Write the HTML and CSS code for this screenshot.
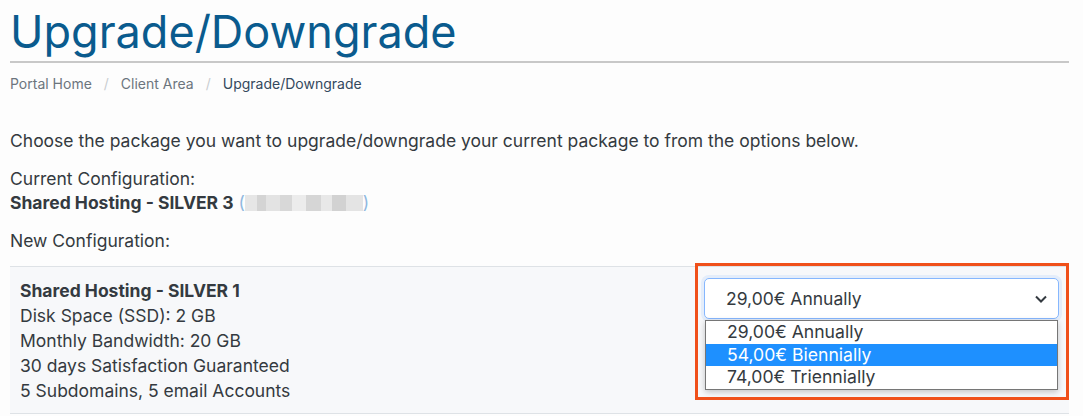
FILE: index.html
```html
<!DOCTYPE html>
<html lang="en">
<head>
<meta charset="utf-8">
<title>Upgrade/Downgrade</title>
<link rel="stylesheet" href="styles.css">
</head>
<body>
<div class="page">
  <h1 class="title">Upgrade/Downgrade</h1>
  <nav class="breadcrumb">
    <a class="crumb" href="#">Portal Home</a>
    <span class="sep">/</span>
    <a class="crumb" href="#">Client Area</a>
    <span class="sep">/</span>
    <span class="crumb active">Upgrade/Downgrade</span>
  </nav>
  <p class="intro">Choose the package you want to upgrade/downgrade your current package to from the options below.</p>
  <div class="current">
    <div>Current Configuration:</div>
    <div><strong>Shared Hosting - SILVER 3</strong> <span class="domain">(<span class="blur"></span>)</span></div>
  </div>
  <div class="newconf">New Configuration:</div>
  <div class="row">
    <div class="desc">
      <strong>Shared Hosting - SILVER 1</strong><br>
      Disk Space (SSD): 2 GB<br>
      Monthly Bandwidth: 20 GB<br>
      30 days Satisfaction Guaranteed<br>
      5 Subdomains, 5 email Accounts
    </div>
    <div class="pick">
      <div class="select">
        <span>29,00€ Annually</span>
        <svg class="chev" width="14" height="10" viewBox="0 0 14 10"><path d="M2 2.5 L7 7.5 L12 2.5" fill="none" stroke="#343a40" stroke-width="2"/></svg>
      </div>
      <ul class="dropdown">
        <li>29,00€ Annually</li>
        <li class="hl">54,00€ Biennially</li>
        <li>74,00€ Triennially</li>
      </ul>
      <div class="mark"></div>
    </div>
  </div>
</div>
</body>
</html>
```

FILE: styles.css
```css
* { box-sizing: border-box; }
html, body { margin: 0; padding: 0; background: #fdfdfd; }
body {
  font-family: Inter, "Noto Sans", sans-serif;
  color: #343a40;
  font-size: 17.5px;
}
.page { padding: 0 14px 0 10px; }
.title {
  margin: 0;
  padding-top: 4px;
  font-size: 45px;
  font-weight: 400;
  line-height: 56px;
  color: #0a5b8e;
  border-bottom: 2px solid #c8c8c8;
  height: 63px;
}
.breadcrumb {
  display: flex;
  align-items: center;
  font-size: 14px;
  height: 40px;
  padding-top: 1px;
}
.crumb { color: #6c757d; text-decoration: none; }
.crumb.active { color: #34495e; }
.sep { color: #c9cdd1; margin: 0 12px; }
.intro { margin: 26px 0 0; line-height: 24px; }
.current { margin-top: 14px; line-height: 24px; }
.domain { color: #8fb8e0; }
.blur {
  display: inline-block;
  width: 118px;
  height: 16px;
  vertical-align: -2px;
  background: linear-gradient(90deg, #e6e6e6 0 10%, #d4d4d4 10% 18%, #e3e3e3 18% 30%, #d8d8d8 30% 40%, #ececec 40% 52%, #d6d6d6 52% 64%, #e8e8e8 64% 74%, #d2d2d2 74% 86%, #e4e4e4 86% 100%);
}
.newconf { margin-top: 14px; line-height: 24px; }
.row {
  margin-top: 13px;
  display: flex;
  justify-content: space-between;
  background: #f7f8fa;
  border-top: 1px solid #dee2e6;
  border-bottom: 1px solid #dee2e6;
}
.desc {
  padding: 11px 10px 10px;
  line-height: 25px;
}
.desc strong { font-weight: 700; }
.pick {
  position: relative;
  padding: 11px 10px 0 0;
}
.select {
  width: 355px;
  height: 41px;
  border: 1px solid #86b7fe;
  border-radius: 5px;
  background: #fff;
  box-shadow: 0 0 0 3px rgba(13,110,253,0.08);
  display: flex;
  align-items: center;
  justify-content: space-between;
  padding: 0 10px 0 21px;
}
.chev { display: block; }
.dropdown {
  position: absolute;
  left: 1px;
  top: 53px;
  width: 353px;
  margin: 0;
  padding: 0;
  list-style: none;
  background: #fff;
  border: 1px solid #767676;
  box-shadow: 0 2px 6px rgba(0,0,0,0.22);
  font-size: 17.6px;
}
.dropdown li { height: 22.5px; line-height: 22px; padding-left: 21px; }
.dropdown li.hl { background: #1e90ff; color: #fff; }
.mark {
  position: absolute;
  left: -9px;
  top: -4px;
  width: 374px;
  height: 137px;
  border: 3px solid #f0501a;
  pointer-events: none;
}
```
